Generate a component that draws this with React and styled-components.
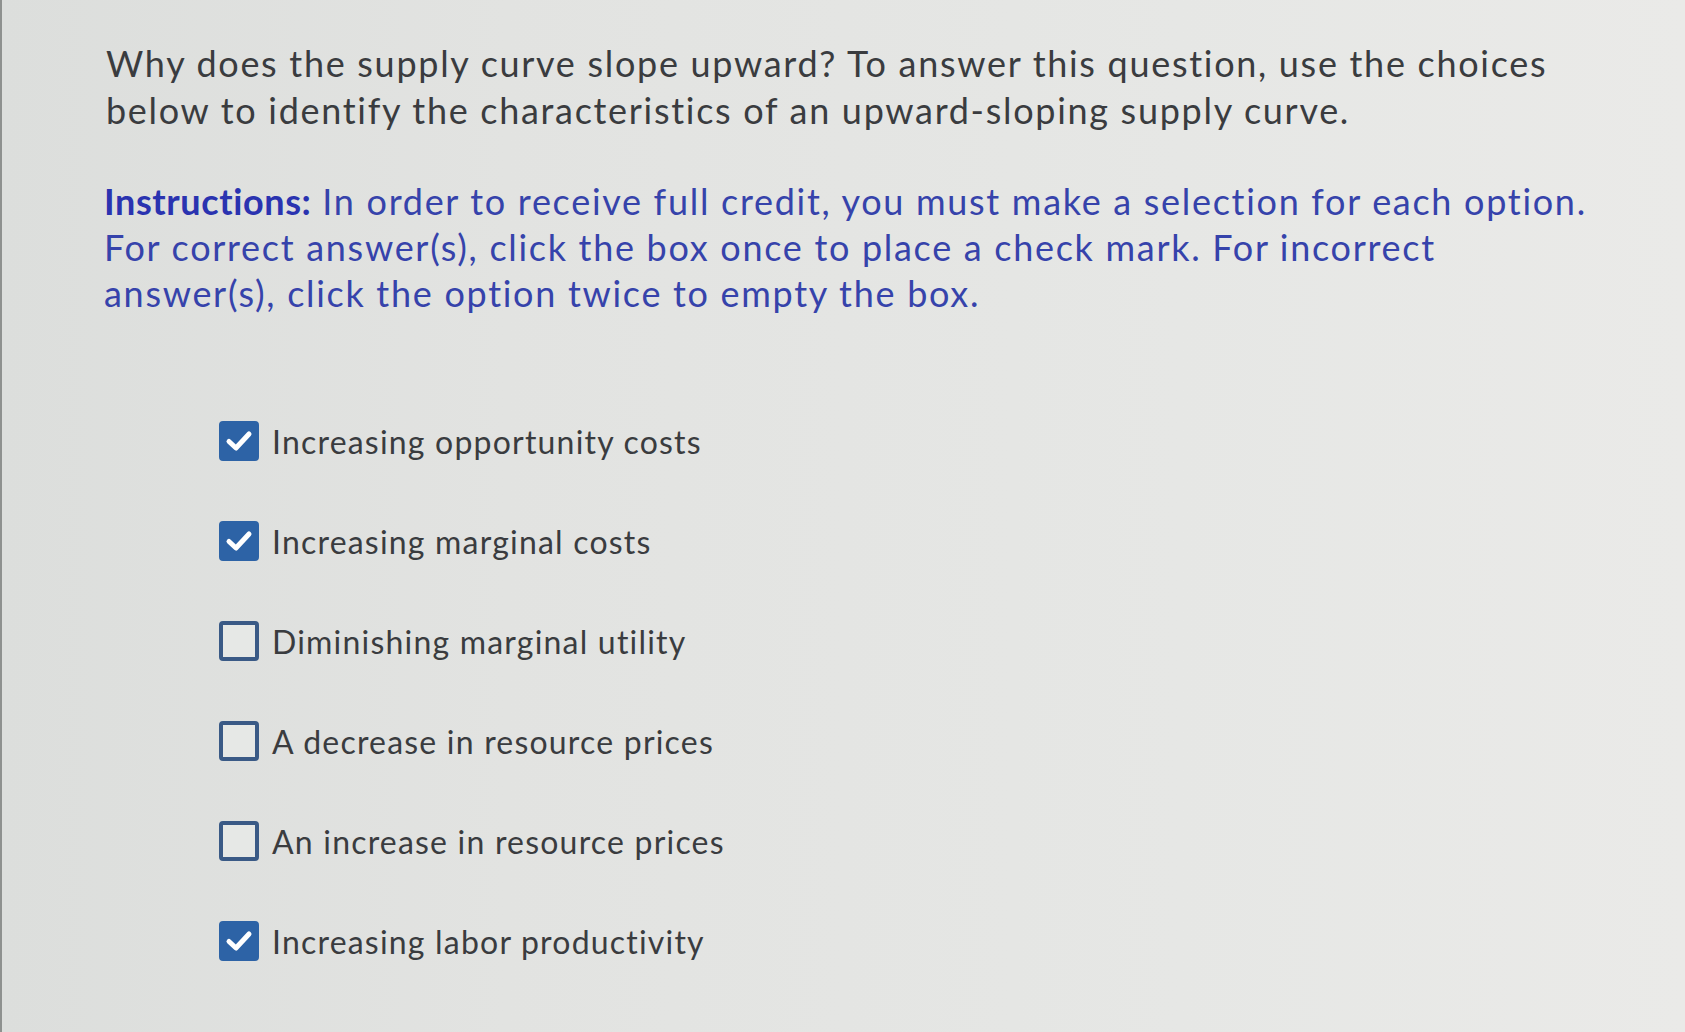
import React from "react";
import styled, { createGlobalStyle } from "styled-components";

const GlobalStyle = createGlobalStyle`
  html, body { margin: 0; padding: 0; }
  body {
    width: 1685px;
    height: 1032px;
    overflow: hidden;
    background: linear-gradient(90deg, #dcdedc 0%, #e2e3e1 30%, #e6e7e5 70%, #eaeae8 100%);
    font-family: "Lato", "Open Sans", sans-serif;
    font-variant-ligatures: none;
  }
`;

const Page = styled.main`
  box-sizing: border-box;
  height: 1032px;
  padding: 40px 0 0 104px;
  border-left: 2px solid #8e918f;
`;

const Question = styled.p`
  margin: 0;
  font-size: 36px;
  line-height: 47px;
  letter-spacing: 1.7px;
  color: #3a3c3f;
  white-space: nowrap;
`;

const Instructions = styled.p`
  margin: 44px 0 0 -2px;
  font-size: 36px;
  line-height: 46px;
  letter-spacing: 1.7px;
  color: #3643ab;
  white-space: nowrap;
`;

const Strong = styled.strong`
  font-weight: 700;
  letter-spacing: 0.6px;
  color: #2a33b0;
`;

const Options = styled.ul`
  list-style: none;
  margin: 75px 0 0 113px;
  padding: 0;
  display: flex;
  flex-direction: column;
`;

const Option = styled.li`
  display: flex;
  align-items: center;
  gap: 13px;
  height: 100px;
`;

const Box = styled.span`
  box-sizing: border-box;
  flex: none;
  width: 40px;
  height: 40px;
  border-radius: 4px;
  display: flex;
  align-items: center;
  justify-content: center;
  background: ${(p) => (p.$checked ? "#2d63a6" : "#e6e8e6")};
  border: 4px solid ${(p) => (p.$checked ? "#2d63a6" : "#3a5a86")};
`;

const Label = styled.span`
  font-size: 32px;
  letter-spacing: 1.2px;
  color: #3a3c3f;
  white-space: nowrap;
`;

const Check = () => (
  <svg width="28" height="24" viewBox="0 0 28 24" aria-hidden="true">
    <path
      d="M4 12.5 L11 19 L24 5"
      fill="none"
      stroke="#ffffff"
      strokeWidth="5"
      strokeLinecap="round"
      strokeLinejoin="round"
    />
  </svg>
);

const choices = [
  { text: "Increasing opportunity costs", checked: true },
  { text: "Increasing marginal costs", checked: true },
  { text: "Diminishing marginal utility", checked: false },
  { text: "A decrease in resource prices", checked: false },
  { text: "An increase in resource prices", checked: false },
  { text: "Increasing labor productivity", checked: true },
];

export default function App() {
  return (
    <>
      <GlobalStyle />
      <Page>
        <Question>
          Why does the supply curve slope upward? To answer this question, use the choices
          <br />
          below to identify the characteristics of an upward-sloping supply curve.
        </Question>
        <Instructions>
          <Strong>Instructions:</Strong> In order to receive full credit, you must make a selection for each option.
          <br />
          For correct answer(s), click the box once to place a check mark. For incorrect
          <br />
          answer(s), click the option twice to empty the box.
        </Instructions>
        <Options>
          {choices.map((c) => (
            <Option key={c.text}>
              <Box $checked={c.checked}>{c.checked && <Check />}</Box>
              <Label>{c.text}</Label>
            </Option>
          ))}
        </Options>
      </Page>
    </>
  );
}
